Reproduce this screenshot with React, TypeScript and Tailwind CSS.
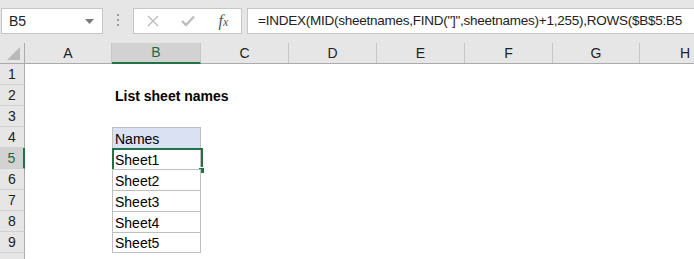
import React from "react";

const cols = [
  { k: "A", w: "w-[87px]" },
  { k: "B", w: "w-[89px]" },
  { k: "C", w: "w-[88px]" },
  { k: "D", w: "w-[88px]" },
  { k: "E", w: "w-[88px]" },
  { k: "F", w: "w-[88px]" },
  { k: "G", w: "w-[87px]" },
];

const tableRows: Record<number, string> = {
  4: "Names",
  5: "Sheet1",
  6: "Sheet2",
  7: "Sheet3",
  8: "Sheet4",
  9: "Sheet5",
};

function BCell({ r }: { r: number }) {
  if (r === 2) {
    return (
      <div className="w-[89px] h-full relative">
        <span className="absolute left-[3px] bottom-[1px] whitespace-nowrap font-bold text-[14px] leading-[18px] text-[#000]">
          List sheet names
        </span>
      </div>
    );
  }
  const t = tableRows[r];
  if (!t) return <div className="w-[89px] h-full" />;
  return (
    <div
      className={
        "w-[89px] h-full relative border-l border-r border-t border-[#bfbfbf] flex items-end pl-[2px] pb-[0px] text-[14px] leading-[18px] text-black " +
        (r === 4 ? "bg-[#d9e1f2]" : "bg-white") +
        (r === 9 ? " border-b" : "")
      }
    >
      {t}
      {r === 5 && (
        <>
          <div className="absolute left-[-1px] top-[-1px] w-[91px] h-[24px] border-2 border-[#217346]" />
          <div className="absolute left-[85px] top-[18px] w-[7px] h-[7px] bg-[#217346] border border-white" />
        </>
      )}
    </div>
  );
}

export default function App() {
  const rows = [1, 2, 3, 4, 5, 6, 7, 8, 9, 10];
  return (
    <div
      className="w-[694px] h-[259px] overflow-hidden bg-white"
      style={{ fontFamily: '"Liberation Sans", Arial, sans-serif' }}
    >
      {/* Formula bar area */}
      <div className="h-[43px] bg-[#e6e6e6] flex items-start pt-[8px]">
        <div className="ml-[1px] w-[102px] h-[26px] bg-white border border-[#c6c6c6] flex items-center justify-between pl-[7px] pr-[8px]">
          <span className="text-[14px] text-[#222]">B5</span>
          <svg width="9" height="5" viewBox="0 0 9 5">
            <path d="M0 0 L9 0 L4.5 5 Z" fill="#7a7a7a" />
          </svg>
        </div>
        <div className="w-[30px] h-[26px] flex flex-col items-center pt-[6px] gap-[3px]">
          <div className="w-[2px] h-[2px] bg-[#9a9a9a]" />
          <div className="w-[2px] h-[2px] bg-[#9a9a9a]" />
          <div className="w-[2px] h-[2px] bg-[#9a9a9a]" />
        </div>
        <div className="w-[109px] h-[26px] bg-white border border-[#c6c6c6] flex items-center pl-[1px]">
          <div className="w-[36px] flex justify-center">
            <svg width="12" height="12" viewBox="0 0 12 12">
              <path d="M1 1 L11 11 M11 1 L1 11" stroke="#bdbdbd" strokeWidth="1.4" />
            </svg>
          </div>
          <div className="w-[36px] flex justify-center">
            <svg width="14" height="12" viewBox="0 0 14 12">
              <path d="M1 6 L5 10 L13 1.5" stroke="#bdbdbd" strokeWidth="2.4" fill="none" />
            </svg>
          </div>
          <div className="w-[36px] flex justify-center">
            <span
              className="italic text-[16px] text-[#555] leading-none"
              style={{ fontFamily: '"Liberation Serif", "Times New Roman", serif' }}
            >
              f<span className="text-[12px]">x</span>
            </span>
          </div>
        </div>
        <div className="ml-[5px] flex-1 h-[26px] bg-white border border-r-0 border-[#c6c6c6] flex items-center pl-[10px] overflow-hidden">
          <span className="whitespace-nowrap text-[13.5px] tracking-[-0.25px] text-[#222]">
            =INDEX(MID(sheetnames,FIND("]",sheetnames)+1,255),ROWS($B$5:B5
          </span>
        </div>
      </div>

      {/* Column headers */}
      <div className="h-[21px] flex bg-[#e6e6e6] border-b border-[#ababab]">
        <div className="w-[25px] h-full border-r border-[#ababab] flex items-end justify-end pr-[4px] pb-[3px]">
          <svg width="13" height="13" viewBox="0 0 13 13">
            <path d="M13 0 L13 13 L0 13 Z" fill="#b9b9b9" />
          </svg>
        </div>
        {cols.map((c) =>
          c.k === "B" ? (
            <div
              key={c.k}
              className={c.w + " h-[21px] bg-[#d2d2d2] border-b-2 border-[#217346] border-r border-r-[#c6c6c6] flex items-center justify-center text-[14px] text-[#1e6b41]"}
            >
              {c.k}
            </div>
          ) : (
            <div
              key={c.k}
              className={c.w + " h-full border-r border-[#c6c6c6] flex items-center justify-center text-[14px] text-[#222]"}
            >
              {c.k}
            </div>
          )
        )}
        <div className="flex-1 h-full flex items-center justify-center text-[14px] text-[#222] pl-[36px]">H</div>
      </div>

      {/* Rows */}
      {rows.map((r) => (
        <div key={r} className="h-[21px] flex">
          <div
            className={
              "w-[25px] h-full flex items-center justify-center text-[14px] border-b border-[#d0d0d0] " +
              (r === 5
                ? "bg-[#d2d2d2] text-[#1e6b41] border-r-2 border-r-[#217346]"
                : "bg-[#e6e6e6] text-[#222] border-r border-r-[#ababab]")
            }
          >
            {r < 10 ? r : ""}
          </div>
          <div className="w-[87px] h-full" />
          <BCell r={r} />
          <div className="flex-1 h-full" />
        </div>
      ))}
    </div>
  );
}
